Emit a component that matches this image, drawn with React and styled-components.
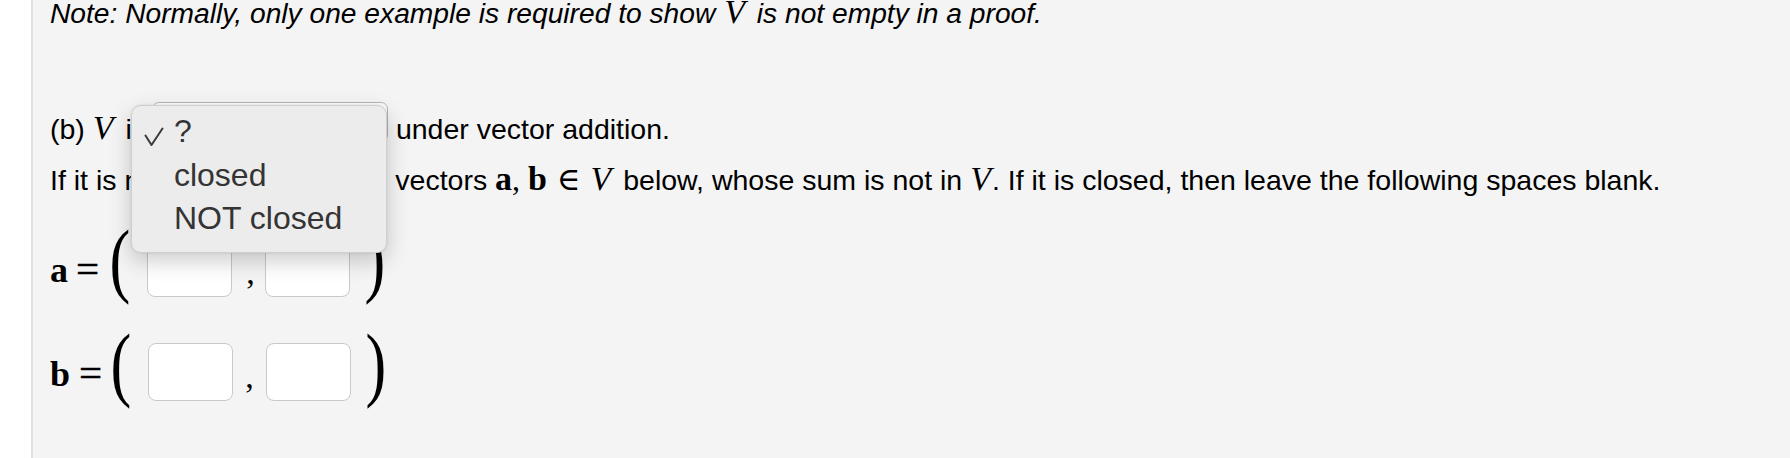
import React from "react";
import styled, { createGlobalStyle } from "styled-components";

const GlobalStyle = createGlobalStyle`
  html, body {
    margin: 0;
    padding: 0;
    background: #ffffff;
  }
  body {
    font-family: "Liberation Sans", Arial, sans-serif;
    color: #000;
    overflow: hidden;
  }
`;

const Page = styled.div`
  display: flex;
  height: 458px;
  padding-left: 31px;
  box-sizing: border-box;
`;

const Panel = styled.div`
  flex: 1;
  background: #f4f4f4;
  border-left: 2px solid #e1e1e1;
  padding-left: 17px;
  display: flex;
  flex-direction: column;
`;

const Note = styled.div`
  font-style: italic;
  font-size: 28.2px;
  line-height: 26px;
  height: 24px;
  white-space: nowrap;
`;

const Line = styled.div`
  font-size: 28.5px;
  line-height: 52px;
  height: 52px;
  white-space: nowrap;
  margin-top: ${(p) => p.$mt || 0}px;
`;

const MI = styled.span`
  font-family: "Liberation Serif", "DejaVu Serif", serif;
  font-style: italic;
  font-size: 34px;
  line-height: 0;
  margin: 0 ${(p) => p.$mr || 2}px 0 ${(p) => p.$ml || 0}px;
`;

const MB = styled.span`
  font-family: "Liberation Serif", "DejaVu Serif", serif;
  font-weight: bold;
  font-style: normal;
  font-size: 34px;
  line-height: 0;
`;

const MO = styled.span`
  font-family: "Liberation Serif", "DejaVu Serif", serif;
  font-size: 32px;
  line-height: 0;
  margin: 0 ${(p) => p.$m || 0}px;
`;

const SelectWrap = styled.span`
  position: relative;
  display: inline-block;
  width: 236px;
  height: 40px;
  vertical-align: -3px;
  box-sizing: border-box;
  border: 1px solid #b4b4b4;
  border-radius: 7px;
  background: linear-gradient(#fdfdfd, #f1f1f1);
  margin-left: -2px;
`;

const Menu = styled.div`
  position: absolute;
  left: -22px;
  top: 2px;
  width: 256px;
  height: 148px;
  box-sizing: border-box;
  padding: 4px 0 0 0;
  background: #ececec;
  border: 1px solid #cfcfcf;
  border-radius: 10px;
  box-shadow: 0 8px 22px rgba(0, 0, 0, 0.2), 0 0 3px rgba(0, 0, 0, 0.08);
  z-index: 10;
`;

const MenuItem = styled.div`
  position: relative;
  height: 43.5px;
  line-height: 43.5px;
  font-family: "Liberation Sans", Arial, sans-serif;
  font-size: 32px;
  color: #343434;
  padding-left: 42px;
`;

const Check = styled.svg`
  position: absolute;
  left: 12px;
  top: 17px;
`;

const MathRow = styled.div`
  display: flex;
  align-items: center;
  height: 70px;
  margin-top: ${(p) => p.$mt}px;
  font-family: "Liberation Serif", "DejaVu Serif", serif;
`;

const VarName = styled.span`
  font-weight: bold;
  font-size: 36px;
  line-height: 36px;
  margin-top: 4px;
`;

const Equals = styled.span`
  font-size: 41px;
  line-height: 40px;
  margin-top: 2px;
  margin-left: ${(p) => p.$ml}px;
  -webkit-text-stroke: 0.4px #000;
`;

const Paren = styled.span`
  display: inline-flex;
  justify-content: center;
  width: 18px;
  height: 70px;
  font-size: 82px;
  line-height: 70px;
  margin-left: ${(p) => p.$ml}px;
  transform: translateY(-8px) scaleX(0.76);
`;

const Box = styled.span`
  display: inline-block;
  width: 85px;
  height: 58px;
  box-sizing: border-box;
  background: #ffffff;
  border: 1.5px solid #c9c9c9;
  border-radius: 8px;
  margin-left: ${(p) => p.$ml}px;
`;

const Comma = styled.span`
  font-size: 34px;
  line-height: 34px;
  margin-top: 10px;
  margin-left: ${(p) => p.$ml}px;
`;

function VectorRow({ name, mt, wide }) {
  return (
    <MathRow $mt={mt}>
      <VarName>{name}</VarName>
      <Equals $ml={wide ? 9 : 8}>=</Equals>
      <Paren $ml={wide ? 10 : 12}>(</Paren>
      <Box $ml={wide ? 18 : 18} />
      <Comma $ml={wide ? 12 : 14}>,</Comma>
      <Box $ml={wide ? 12 : 10} />
      <Paren $ml={16}>)</Paren>
    </MathRow>
  );
}

export default function App() {
  return (
    <>
      <GlobalStyle />
      <Page>
        <Panel>
          <Note>
            Note: Normally, only one example is required to show <MI $ml={1} $mr={4}>V</MI> is not
            empty in a proof.
          </Note>
          <Line $mt={78}>
            (b) <MI $mr={4}>V</MI> is{" "}
            <SelectWrap>
              <Menu>
                <MenuItem>
                  <Check width="20" height="20" viewBox="0 0 20 20">
                    <polyline
                      points="1.5,8.5 7.5,18 18.5,1.5"
                      fill="none"
                      stroke="#3a3a3a"
                      strokeWidth="2"
                      strokeLinecap="round"
                      strokeLinejoin="round"
                    />
                  </Check>
                  ?
                </MenuItem>
                <MenuItem>closed</MenuItem>
                <MenuItem>NOT closed</MenuItem>
              </Menu>
            </SelectWrap>{" "}
            under vector addition.
          </Line>
          <Line>
            If it is not closed, enter two vectors <MB>a</MB>
            <MO>,</MO> <MB>b</MB> <MO $m={2}>∈</MO> <MI $mr={4}>V</MI> below, whose sum is not in{" "}
            <MI $mr={1}>V</MI>. If it is closed, then leave the following spaces blank.
          </Line>
          <VectorRow name="a" mt={27} />
          <VectorRow name="b" mt={34} wide />
        </Panel>
      </Page>
    </>
  );
}
